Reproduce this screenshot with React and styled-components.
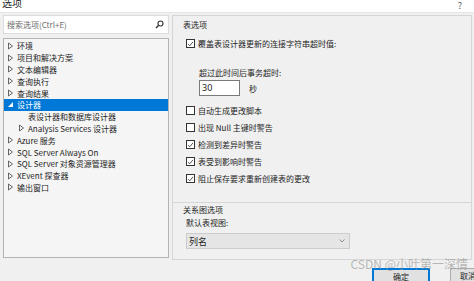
import styled, { createGlobalStyle } from "styled-components";

const GlobalStyle = createGlobalStyle`
  html, body {
    margin: 0;
    padding: 0;
    background: #f0f0f0;
    overflow: hidden;
  }
  body {
    font-family: "Noto Sans CJK SC", "Noto Sans", sans-serif;
    font-size: 8px;
    color: #1e1e1e;
  }
`;

const Window = styled.div`
  width: 474px;
  height: 281px;
  display: flex;
  flex-direction: column;
  overflow: hidden;
  position: relative;
`;

const TitleBar = styled.div`
  height: 13px;
  background: #ffffff;
  display: flex;
  justify-content: space-between;
  align-items: flex-end;
  padding: 0 12px 0 2px;
  overflow: hidden;
  border-bottom: 1px solid #e6e6e6;
  box-sizing: border-box;
`;

const Title = styled.span`
  font-size: 10px;
  line-height: 10px;
  margin-bottom: 4px;
  color: #222;
`;

const Help = styled.span`
  font-size: 9px;
  color: #555;
  align-self: flex-start;
  margin-top: -1px;
`;

const Body = styled.div`
  display: flex;
  height: 248px;
  padding: 2px 2px 0 3px;
  box-sizing: border-box;
  gap: 3px;
`;

const LeftCol = styled.div`
  width: 166px;
  display: flex;
  flex-direction: column;
  gap: 4px;
`;

const Search = styled.div`
  height: 19px;
  background: #fff;
  border: 1px solid #dcdcdc;
  display: flex;
  align-items: center;
  justify-content: space-between;
  padding: 0 4px 0 3px;
  box-sizing: border-box;
  color: #6d6d6d;
`;

const Tree = styled.div`
  flex: 1;
  background: #f5f5f5;
  border: 1px solid #b4b4b4;
  padding-top: 1px;
  margin-bottom: 3px;
`;

const Row = styled.div`
  height: 11.8px;
  display: flex;
  align-items: center;
  padding-left: ${(p) => 3 + p.$level * 11}px;
  background: ${(p) => (p.$selected ? "#0078d7" : "transparent")};
  color: ${(p) => (p.$selected ? "#fff" : "#1e1e1e")};
  white-space: nowrap;
`;

const Arrow = styled.span`
  width: 7px;
  display: inline-flex;
  align-items: center;
  margin-right: 3px;
`;

const RightCol = styled.div`
  flex: 1;
  display: flex;
  flex-direction: column;
`;

const Group = styled.div`
  border: 1px solid #d6d6d6;
  border-top: ${(p) => (p.$first ? "1px solid #d6d6d6" : "none")};
  height: ${(p) => p.$h}px;
  box-sizing: border-box;
  padding: ${(p) => (p.$first ? "3px 0 0 10px" : "1px 0 0 10px")};
  display: flex;
  flex-direction: column;
`;

const GroupTitle = styled.div`
  line-height: 12px;
  margin-bottom: ${(p) => p.$mb || 0}px;
  margin-left: ${(p) => p.$ml || 0}px;
`;

const Check = styled.label`
  display: flex;
  align-items: center;
  gap: 3px;
  height: 17px;
  margin-left: 3px;
`;

const Box = styled.span`
  width: 9px;
  height: 9px;
  border: 1px solid #333;
  background: #fff;
  box-sizing: border-box;
  display: inline-flex;
  align-items: center;
  justify-content: center;
`;

const Sub = styled.div`
  margin: 15px 0 0 16px;
  display: flex;
  flex-direction: column;
  gap: 2px;
`;

const TimeoutRow = styled.div`
  display: flex;
  align-items: center;
  gap: 9px;
  margin-bottom: 6px;
`;

const Input = styled.div`
  width: 41px;
  height: 16px;
  background: #fff;
  border: 1px solid #7a7a7a;
  box-sizing: border-box;
  padding-left: 2px;
  font-size: 9px;
  line-height: 14px;
  font-family: "Noto Sans", sans-serif;
`;

const Combo = styled.div`
  width: 164px;
  height: 16px;
  margin: 4px 0 0 3px;
  background: #e5e5e5;
  border: 1px solid #cccccc;
  box-sizing: border-box;
  display: flex;
  align-items: center;
  justify-content: space-between;
  padding: 0 4px 0 2px;
  font-size: 9px;
`;

const Footer = styled.div`
  flex: 1;
  display: flex;
  justify-content: flex-end;
  align-items: flex-end;
  gap: 20px;
  position: relative;
`;

const Button = styled.div`
  width: ${(p) => p.$w}px;
  height: 13px;
  background: #e1e1e1;
  border: ${(p) => (p.$primary ? "2px solid #0078d7" : "1px solid #adadad")};
  border-bottom: none;
  box-sizing: border-box;
  display: flex;
  justify-content: ${(p) => (p.$primary ? "center" : "flex-start")};
  padding: 1px 0 0 ${(p) => (p.$primary ? 0 : 9)}px;
  margin-right: ${(p) => p.$mr || 0}px;
  font-size: 8px;
  flex-shrink: 0;
`;

const Watermark = styled.span`
  position: absolute;
  right: 6px;
  top: -6px;
  font-size: 12px;
  color: rgba(150, 150, 150, 0.65);
  white-space: nowrap;
`;

const Tri = ({ open }) =>
  open ? (
    <svg width="7" height="7" viewBox="0 0 7 7">
      <path d="M6 1 L6 6 L1 6 Z" fill="#fff" />
    </svg>
  ) : (
    <svg width="7" height="8" viewBox="0 0 7 8">
      <path d="M1.5 1 L5.5 4 L1.5 7 Z" fill="none" stroke="#555" strokeWidth="0.9" />
    </svg>
  );

const Tick = () => (
  <svg width="8" height="8" viewBox="0 0 8 8">
    <path d="M1.3 4.2 L3.2 6 L6.8 1.6" fill="none" stroke="#222" strokeWidth="0.9" />
  </svg>
);

const items = [
  { t: "环境", l: 0, a: true },
  { t: "项目和解决方案", l: 0, a: true },
  { t: "文本编辑器", l: 0, a: true },
  { t: "查询执行", l: 0, a: true },
  { t: "查询结果", l: 0, a: true },
  { t: "设计器", l: 0, a: true, open: true, sel: true },
  { t: "表设计器和数据库设计器", l: 1, a: false },
  { t: "Analysis Services 设计器", l: 1, a: true },
  { t: "Azure 服务", l: 0, a: true },
  { t: "SQL Server Always On", l: 0, a: true },
  { t: "SQL Server 对象资源管理器", l: 0, a: true },
  { t: "XEvent 探查器", l: 0, a: true },
  { t: "输出窗口", l: 0, a: true },
];

const checks = [
  { t: "自动生成更改脚本", c: false },
  { t: "出现 Null 主键时警告", c: false },
  { t: "检测到差异时警告", c: true },
  { t: "表受到影响时警告", c: true },
  { t: "阻止保存要求重新创建表的更改", c: true },
];

export default function App() {
  return (
    <Window>
      <GlobalStyle />
      <TitleBar>
        <Title>选项</Title>
        <Help>?</Help>
      </TitleBar>
      <Body>
        <LeftCol>
          <Search>
            <span>搜索选项(Ctrl+E)</span>
            <svg width="9" height="9" viewBox="0 0 9 9">
              <circle cx="5.5" cy="3.5" r="2.5" fill="none" stroke="#333" strokeWidth="1.1" />
              <path d="M3.7 5.3 L1 8" stroke="#333" strokeWidth="1.4" />
            </svg>
          </Search>
          <Tree>
            {items.map((it, i) => (
              <Row key={i} $level={it.l} $selected={it.sel}>
                <Arrow>{it.a ? <Tri open={it.open} /> : null}</Arrow>
                {it.t}
              </Row>
            ))}
          </Tree>
        </LeftCol>
        <RightCol>
          <Group $first $h={188}>
            <GroupTitle $mb={4}>表选项</GroupTitle>
            <Check>
              <Box>
                <Tick />
              </Box>
              覆盖表设计器更新的连接字符串超时值:
            </Check>
            <Sub>
              <span>超过此时间后事务超时:</span>
              <TimeoutRow>
                <Input>30</Input>
                <span>秒</span>
              </TimeoutRow>
            </Sub>
            {checks.map((c, i) => (
              <Check key={i}>
                <Box>{c.c ? <Tick /> : null}</Box>
                {c.t}
              </Check>
            ))}
          </Group>
          <Group $h={57}>
            <GroupTitle $mb={1}>关系图选项</GroupTitle>
            <GroupTitle $ml={3}>默认表视图:</GroupTitle>
            <Combo>
              <span>列名</span>
              <svg width="6" height="4" viewBox="0 0 6 4">
                <path d="M0.5 0.5 L3 3 L5.5 0.5" fill="none" stroke="#777" strokeWidth="0.8" />
              </svg>
            </Combo>
          </Group>
        </RightCol>
      </Body>
      <Footer>
        <Watermark>CSDN @小叶第一深情</Watermark>
        <Button $primary $w={58}>确定</Button>
        <Button $w={50} $mr={-26}>取消</Button>
      </Footer>
    </Window>
  );
}
